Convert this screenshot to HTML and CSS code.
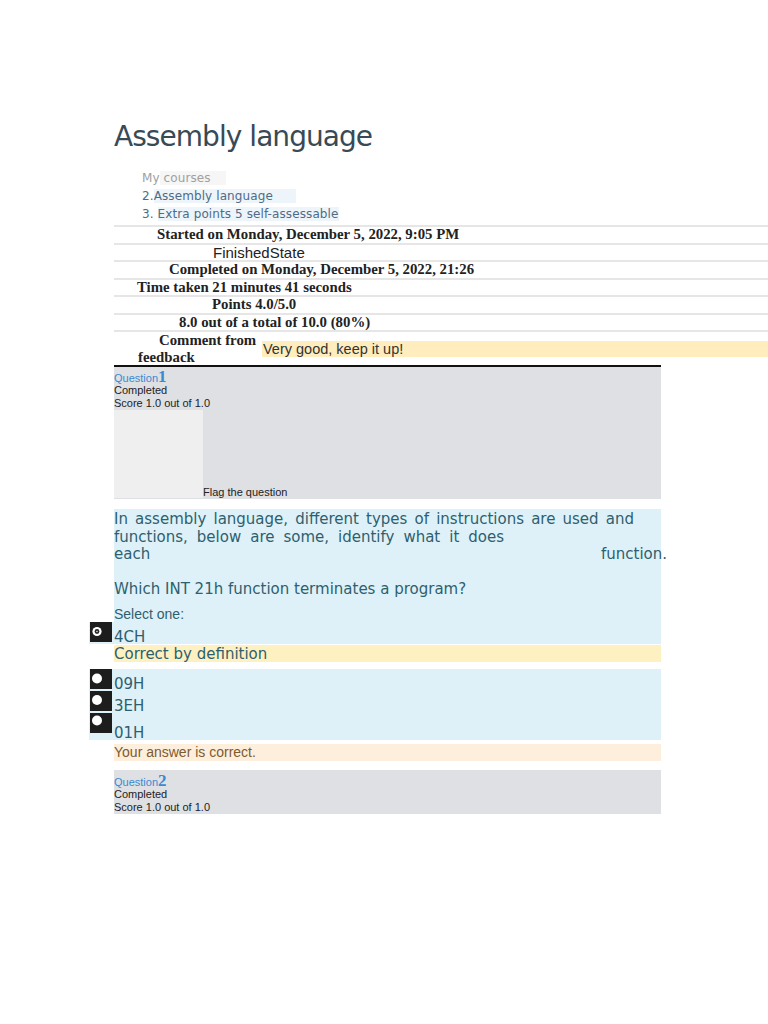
FILE: index.html
```html
<!DOCTYPE html>
<html lang="en">
<head>
<meta charset="utf-8">
<title>Assembly language</title>
<link rel="stylesheet" href="styles.css">
</head>
<body>
<main class="page">
  <h1 class="title">Assembly language</h1>

  <nav class="crumbs">
    <div class="crumb crumb-muted">My<span class="crumb-bg"> courses&nbsp;&nbsp;&nbsp;&nbsp;</span></div>
    <div class="crumb">2.<span class="crumb-bg">Assembly language&nbsp;&nbsp;&nbsp;&nbsp;&nbsp;&nbsp;</span></div>
    <div class="crumb">3. <span class="crumb-bg">Extra points 5 self-assessable</span></div>
  </nav>

  <section class="summary">
    <div class="summary-row row-started">Started on Monday, December 5, 2022, 9:05 PM</div>
    <div class="summary-row row-state">FinishedState</div>
    <div class="summary-row row-completed">Completed on Monday, December 5, 2022, 21:26</div>
    <div class="summary-row row-time">Time taken 21 minutes 41 seconds</div>
    <div class="summary-row row-points">Points 4.0/5.0</div>
    <div class="summary-row row-grade">8.0 out of a total of 10.0 (80%)</div>
    <div class="summary-row comment-row">
      <div class="comment-label">Comment from feedback</div>
      <div class="comment-value">Very good, keep it up!</div>
    </div>
  </section>

  <section class="question-info first">
    <div class="q-number"><span class="q-word">Question</span><span class="q-digit">1</span></div>
    <div class="q-line">Completed</div>
    <div class="q-line">Score 1.0 out of 1.0</div>
    <div class="flag-area">
      <div class="flag-box"></div>
      <div class="flag-text">Flag the question</div>
    </div>
  </section>

  <section class="question-text">
    <div class="jline line-a">In assembly language, different types of instructions are used and</div>
    <div class="jline line-b">functions, below are some, identify what it does</div>
    <div class="jline line-c"><span>each</span><span>function.</span></div>
    <p class="prompt">Which INT 21h function terminates a program?</p>
    <p class="select-one">Select one:</p>
  </section>

  <div class="options">
    <div class="option opt-first">
      <svg class="radio" width="22" height="20" viewBox="0 0 22 20"><rect width="22" height="20" fill="#1d1d1d"/><circle cx="7" cy="9.5" r="4.6" fill="#fff"/><circle cx="7" cy="9.5" r="2.4" fill="#2a2a2a"/><circle cx="7" cy="9.5" r="0.8" fill="#ddd"/></svg>
      <span class="option-label">4CH</span>
    </div>
  </div>
  <div class="feedback-correct">Correct by definition</div>

  <div class="options options-rest">
    <div class="option">
      <svg class="radio" width="22" height="20" viewBox="0 0 22 20"><rect width="22" height="20" fill="#1d1d1d"/><circle cx="7" cy="9.5" r="5" fill="#fff"/></svg>
      <span class="option-label">09H</span>
    </div>
    <div class="option">
      <svg class="radio" width="22" height="20" viewBox="0 0 22 20"><rect width="22" height="20" fill="#1d1d1d"/><circle cx="7" cy="9" r="5" fill="#fff"/></svg>
      <span class="option-label">3EH</span>
    </div>
    <div class="option opt-last">
      <svg class="radio" width="22" height="20" viewBox="0 0 22 20"><rect width="22" height="20" fill="#1d1d1d"/><circle cx="7" cy="7.5" r="5" fill="#fff"/></svg>
      <span class="option-label">01H</span>
    </div>
  </div>

  <div class="outcome">Your answer is correct.</div>

  <section class="question-info second">
    <div class="q-number"><span class="q-word">Question</span><span class="q-digit">2</span></div>
    <div class="q-line">Completed</div>
    <div class="q-line">Score 1.0 out of 1.0</div>
  </section>
</main>
</body>
</html>
```

FILE: styles.css
```css
* {
  box-sizing: border-box;
}

html, body {
  margin: 0;
  padding: 0;
  background: #ffffff;
}

.page {
  padding: 120px 0 80px 114px;
  font-family: "DejaVu Sans", Verdana, sans-serif;
  color: #222;
}

/* heading */
.title {
  margin: 0;
  font-family: "DejaVu Sans", Verdana, sans-serif;
  font-weight: normal;
  font-size: 28px;
  line-height: 34px;
  letter-spacing: -0.95px;
  color: #384a55;
}

/* breadcrumb trail */
.crumbs {
  margin-top: 15px;
  padding-left: 28px;
  font-size: 12px;
  line-height: 18px;
  letter-spacing: 0.1px;
  color: #4e6b88;
}

.crumb-muted {
  color: #a0a0a0;
}

.crumb-bg {
  background: #eef5fa;
}

.crumb-muted .crumb-bg {
  background: #f6f6f6;
}

/* attempt summary table */
.summary {
  margin-top: 2px;
  font-family: "Liberation Serif", "Times New Roman", serif;
  font-weight: bold;
  font-size: 14.8px;
  color: #222;
}

.summary-row {
  border-top: 2px solid #e6e6e6;
  line-height: 15.5px;
  white-space: nowrap;
}

.row-started { padding-left: 43px; }
.row-state {
  padding-left: 99px;
  font-family: "Liberation Sans", Arial, sans-serif;
  font-weight: normal;
  font-size: 15px;
}
.row-completed { padding-left: 55px; }
.row-time { padding-left: 23px; }
.row-points { padding-left: 98px; }
.row-grade { padding-left: 65px; }

.comment-row {
  display: flex;
  align-items: center;
  white-space: normal;
}

.comment-label {
  width: 148px;
  flex: none;
  padding-left: 24px;
  text-indent: 21px;
  line-height: 16.5px;
}

.comment-value {
  flex: 1;
  height: 16px;
  line-height: 16px;
  padding-left: 1px;
  background: #ffedbd;
  font-family: "Liberation Sans", Arial, sans-serif;
  font-weight: normal;
  font-size: 14.5px;
  color: #333;
}

/* question header blocks */
.question-info {
  width: 547px;
  background: #dee0e4;
  font-family: "Liberation Sans", Arial, sans-serif;
  font-size: 11px;
  color: #222;
  padding-top: 4px;
}

.question-info.first {
  border-top: 2px solid #111;
  padding-top: 3px;
  padding-bottom: 1px;
}

.question-info.second {
  margin-top: 9px;
}

.q-number {
  height: 14px;
  line-height: 14px;
  color: #3a8ad0;
}

.q-digit {
  font-family: "Liberation Serif", "Times New Roman", serif;
  font-weight: bold;
  font-size: 17px;
}

.q-line {
  line-height: 13px;
}

.flag-area {
  display: flex;
  align-items: flex-end;
  height: 88px;
}

.flag-box {
  width: 89px;
  height: 88px;
  background: #efefef;
}

.flag-text {
  line-height: 13px;
  margin-bottom: -1px;
}

/* question body */
.question-text {
  width: 547px;
  margin-top: 10px;
  padding-top: 2px;
  background: #def1f8;
  color: #2e5f6f;
  font-size: 15px;
  line-height: 17.5px;
}

.jline {
  white-space: nowrap;
  text-align: justify;
  text-align-last: justify;
}

.line-a { width: 520px; }
.line-b { width: 390px; }
.line-c {
  width: 553px;
  display: flex;
  justify-content: space-between;
}

.prompt {
  margin: 17.5px 0 0;
}

.select-one {
  margin: 7px 0 0;
  font-family: "Liberation Sans", Arial, sans-serif;
  font-size: 14px;
  line-height: 17px;
}

/* answer options */
.options {
  width: 572px;
  margin-left: -25px;
  background: #def1f8;
  color: #2e5f6f;
  font-size: 15px;
}

.options-rest {
  margin-top: 7px;
}

.option {
  display: flex;
  align-items: flex-start;
  height: 22px;
}

.radio {
  flex: none;
  margin-left: 1px;
  margin-right: 2px;
  display: block;
}

.option-label {
  line-height: 16px;
  padding-top: 7px;
}

.opt-first {
  margin-top: -1px;
}

.opt-first .option-label {
  padding-top: 7px;
}

.opt-last {
  height: 27px;
}

.opt-last .option-label {
  padding-top: 12px;
}

.feedback-correct {
  width: 547px;
  margin-top: 1px;
  padding-top: 1px;
  background: #fef1c1;
  color: #2e5f6f;
  font-size: 15px;
  line-height: 16px;
}

.outcome {
  width: 547px;
  margin-top: 4px;
  background: #fdefdc;
  color: #7f5a2e;
  font-family: "Liberation Sans", Arial, sans-serif;
  font-size: 14px;
  line-height: 17px;
}
```
